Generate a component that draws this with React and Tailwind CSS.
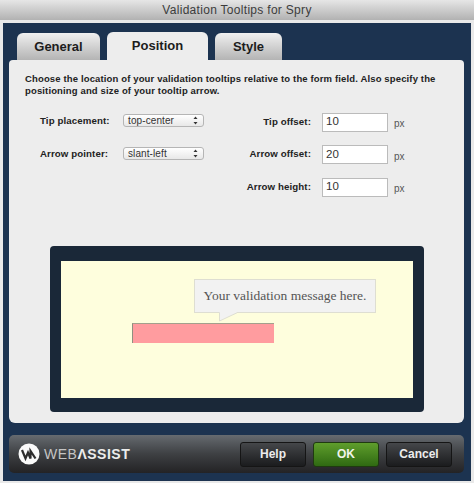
const sans = { fontFamily: '"Liberation Sans", Arial, sans-serif' };

function Tab({ label, active, width }) {
  return (
    <div
      className={
        "flex items-center justify-center rounded-t-[6px] text-[13px] font-bold text-[#1c1c1c] " +
        (active
          ? "h-[28px] bg-[#ededed]"
          : "h-[27px] bg-gradient-to-b from-[#f0f0f0] to-[#b4b4b4]")
      }
      style={{ width }}
    >
      {label}
    </div>
  );
}

function SelectBox({ value }) {
  return (
    <div className="flex h-[13px] w-[81px] items-center justify-between rounded-[3px] border border-[#b5b5b5] bg-gradient-to-b from-[#ffffff] to-[#e8e8e8] pl-[4px] pr-[5px]">
      <span className="text-[10px] leading-none tracking-[0.1px] text-[#333]">{value}</span>
      <svg width="5" height="9" viewBox="0 0 5 9">
        <path d="M2.5 0.5 L4.5 3 L0.5 3 Z" fill="#333" />
        <path d="M2.5 8.5 L4.5 6 L0.5 6 Z" fill="#333" />
      </svg>
    </div>
  );
}

function NumberField({ label, value }) {
  return (
    <div className="flex h-[18px] items-center">
      <span className="w-[77px] whitespace-nowrap text-right text-[9.7px] font-bold tracking-[0.1px] text-[#222]">{label}</span>
      <div className="ml-[11px] flex h-[19px] w-[66px] items-center border border-[#bbbbbb] bg-white pl-[3px] text-[11.5px] text-[#333]">
        {value}
      </div>
      <span className="ml-[6px] mt-[3px] text-[10px] text-[#555]">px</span>
    </div>
  );
}

function Logo() {
  return (
    <div className="flex items-center">
      <svg width="22" height="22" viewBox="0 0 22 22">
        <circle cx="11" cy="11" r="10.5" fill="#fafafa" />
        <path d="M4 7 L7.5 15.5 L10 9.5 L12.5 15.5 L12.5 8 L17.5 15.5" fill="none" stroke="#2c2c2c" strokeWidth="2.2" />
      </svg>
      <span className="ml-[4px] text-[14px] leading-none tracking-[0.5px] text-[#c4c4c4]">WEB</span>
      <span className="text-[14px] font-bold leading-none tracking-[0.5px] text-[#ececec]">ΛSSIST</span>
    </div>
  );
}

function FooterButton({ label, green }) {
  return (
    <div
      className={
        "flex h-[25px] w-[66px] items-center justify-center rounded-[3px] border text-[12px] font-bold " +
        (green
          ? "border-[#1f3a10] bg-gradient-to-b from-[#5f9e2c] to-[#2f6a12] text-[#f0f5ea]"
          : "border-[#151515] bg-gradient-to-b from-[#45474a] to-[#1b1c1e] text-[#ececec]")
      }
    >
      {label}
    </div>
  );
}

export default function App() {
  return (
    <div className="flex h-[483px] w-[474px] flex-col overflow-hidden bg-[#e9e9e9]" style={sans}>
      <div className="flex h-[20px] shrink-0 items-center justify-center bg-gradient-to-b from-[#e6e6e6] to-[#b2b2b2] text-[12px] tracking-[0.3px] text-[#3c3c3c]">
        Validation Tooltips for Spry
      </div>
      <div className="mx-[3px] mt-[3px] flex h-[458px] flex-col bg-[#1c3350] pl-[6px] pr-[7px]">
        <div className="flex items-end gap-[7px] pl-[8px] pt-[9px]">
          <Tab label="General" width={83} />
          <Tab label="Position" width={101} active />
          <Tab label="Style" width={67} />
        </div>
        <div className="flex h-[363px] flex-col rounded-b-[6px] rounded-tl-[4px] rounded-tr-[4px] bg-[#ededed]">
          <p className="mx-[16px] mt-[13px] whitespace-nowrap text-[9.5px] font-bold leading-[11.5px] tracking-[0.14px] text-[#222]">
            Choose the location of your validation tooltips relative to the form field. Also specify the
            <br />
            positioning and size of your tooltip arrow.
          </p>
          <div className="mt-[17px] flex">
            <div className="ml-[31px] mt-[1px] grid w-[193px] grid-cols-[83px_81px] content-start items-center gap-y-[20px]">
              <span className="whitespace-nowrap text-[9.7px] font-bold leading-[13px] tracking-[0.1px] text-[#222]">Tip placement:</span>
              <SelectBox value="top-center" />
              <span className="whitespace-nowrap text-[9.7px] font-bold leading-[13px] tracking-[0.1px] text-[#222]">Arrow pointer:</span>
              <SelectBox value="slant-left" />
            </div>
            <div className="ml-[1px] flex flex-col gap-[14.5px]">
              <NumberField label="Tip offset:" value="10" />
              <NumberField label="Arrow offset:" value="20" />
              <NumberField label="Arrow height:" value="10" />
            </div>
          </div>
          <div className="ml-[41px] mr-[40px] mt-[50px] h-[166px] rounded-[4px] bg-[#1a2838] px-[11px] pt-[15px]">
            <div className="relative h-[137px] bg-[#fefedd]">
              <div className="absolute left-[71px] top-[62px] h-[20px] w-[142px] border-l border-t border-l-[#8f8f80] border-t-[#a3a08c] bg-[#ff9c9f]" />
              <div
                className="absolute left-[133px] top-[18px] flex h-[34px] w-[182px] items-center justify-center border border-[#deded2] bg-[#f2f2f2] text-[13.5px] text-[#555]"
                style={{ fontFamily: '"Liberation Serif", "Times New Roman", serif' }}
              >
                Your validation message here.
              </div>
              <svg className="absolute left-[158px] top-[51px]" width="20" height="10" viewBox="0 0 20 10">
                <path d="M0.5 0 L0.5 9 L18 0.8 L18 0 Z" fill="#f2f2f2" />
                <path d="M0.5 0.5 L0.5 9 L18 0.8" fill="none" stroke="#deded2" />
              </svg>
            </div>
          </div>
        </div>
        <div className="mt-[12px] flex h-[38px] items-center justify-between rounded-[5px] bg-gradient-to-b from-[#666b70] via-[#3e4043] to-[#232325] pl-[9px] pr-[12px]">
          <Logo />
          <div className="flex gap-[7px]">
            <FooterButton label="Help" />
            <FooterButton label="OK" green />
            <FooterButton label="Cancel" />
          </div>
        </div>
      </div>
    </div>
  );
}
